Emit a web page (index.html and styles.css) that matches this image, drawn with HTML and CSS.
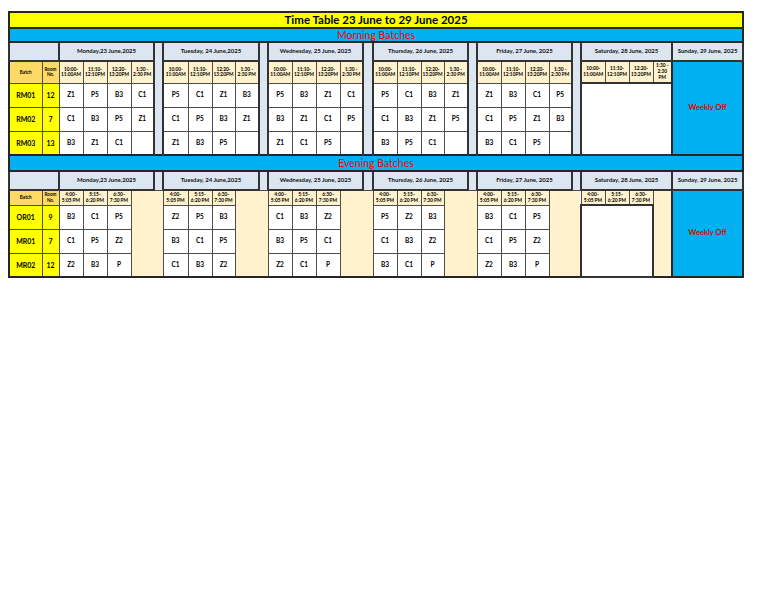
FILE: index.html
```html
<!DOCTYPE html>
<html>
<head>
<meta charset="utf-8">
<link rel="stylesheet" href="styles.css">
</head>
<body>
<table class="tt">
<colgroup>
<col style="width:33px"><col style="width:17px">
<col style="width:24px"><col style="width:24px"><col style="width:24px"><col style="width:23px"><col style="width:9px">
<col style="width:25px"><col style="width:24px"><col style="width:23px"><col style="width:24px"><col style="width:9px">
<col style="width:24px"><col style="width:24px"><col style="width:24px"><col style="width:23px"><col style="width:10px">
<col style="width:24px"><col style="width:24px"><col style="width:23px"><col style="width:24px"><col style="width:9px">
<col style="width:24px"><col style="width:24px"><col style="width:24px"><col style="width:23px"><col style="width:9px">
<col style="width:24px"><col style="width:24px"><col style="width:24px"><col style="width:19px">
<col style="width:71px">
</colgroup>
<tr class="r-title"><td colspan="32" class="title">Time Table 23 June to 29 June 2025</td></tr>
<tr class="r-band"><td colspan="32" class="band">Morning Batches</td></tr>
<tr class="r-day">
<td colspan="2" class="day"></td>
<td colspan="4" class="day">Monday,23 June,2025</td><td class="sp" rowspan="5"></td>
<td colspan="4" class="day">Tuesday, 24 June,2025</td><td class="sp" rowspan="5"></td>
<td colspan="4" class="day">Wednesday, 25 June, 2025</td><td class="sp" rowspan="5"></td>
<td colspan="4" class="day">Thursday, 26 June, 2025</td><td class="sp" rowspan="5"></td>
<td colspan="4" class="day">Friday, 27 June, 2025</td><td class="sp" rowspan="5"></td>
<td colspan="4" class="day">Saturday, 28 June, 2025</td>
<td class="day">Sunday, 29 June, 2025</td>
</tr>
<tr class="r-time">
<td class="bh">Batch</td><td class="bh">Room<br>No.</td>
<td class="tm">10:00-<br>11:00AM</td><td class="tm">11:10-<br>12:10PM</td><td class="tm">12:20-<br>13:20PM</td><td class="tm">1:30 -<br>2:30 PM</td>
<td class="tm">10:00-<br>11:00AM</td><td class="tm">11:10-<br>12:10PM</td><td class="tm">12:20-<br>13:20PM</td><td class="tm">1:30 -<br>2:30 PM</td>
<td class="tm">10:00-<br>11:00AM</td><td class="tm">11:10-<br>12:10PM</td><td class="tm">12:20-<br>13:20PM</td><td class="tm">1:30 -<br>2:30 PM</td>
<td class="tm">10:00-<br>11:00AM</td><td class="tm">11:10-<br>12:10PM</td><td class="tm">12:20-<br>13:20PM</td><td class="tm">1:30 -<br>2:30 PM</td>
<td class="tm">10:00-<br>11:00AM</td><td class="tm">11:10-<br>12:10PM</td><td class="tm">12:20-<br>13:20PM</td><td class="tm">1:30 -<br>2:30 PM</td>
<td class="tm">10:00-<br>11:00AM</td><td class="tm">11:10-<br>12:10PM</td><td class="tm">12:20-<br>13:20PM</td><td class="tm">1:30 -<br>2:30<br>PM</td>
<td class="off" rowspan="4">Weekly Off</td>
</tr>
<tr class="r-data">
<td class="bt">RM01</td><td class="bt">12</td>
<td>Z1</td><td>P5</td><td>B3</td><td>C1</td>
<td>P5</td><td>C1</td><td>Z1</td><td>B3</td>
<td>P5</td><td>B3</td><td>Z1</td><td>C1</td>
<td>P5</td><td>C1</td><td>B3</td><td>Z1</td>
<td>Z1</td><td>B3</td><td>C1</td><td>P5</td>
<td colspan="4" rowspan="3" class="blank"></td>
</tr>
<tr class="r-data">
<td class="bt">RM02</td><td class="bt">7</td>
<td>C1</td><td>B3</td><td>P5</td><td>Z1</td>
<td>C1</td><td>P5</td><td>B3</td><td>Z1</td>
<td>B3</td><td>Z1</td><td>C1</td><td>P5</td>
<td>C1</td><td>B3</td><td>Z1</td><td>P5</td>
<td>C1</td><td>P5</td><td>Z1</td><td>B3</td>
</tr>
<tr class="r-data">
<td class="bt">RM03</td><td class="bt">13</td>
<td>B3</td><td>Z1</td><td>C1</td><td></td>
<td>Z1</td><td>B3</td><td>P5</td><td></td>
<td>Z1</td><td>C1</td><td>P5</td><td></td>
<td>B3</td><td>P5</td><td>C1</td><td></td>
<td>B3</td><td>C1</td><td>P5</td><td></td>
</tr>
<tr class="r-band2"><td colspan="32" class="band">Evening Batches</td></tr>
<tr class="r-day">
<td colspan="2" class="day"></td>
<td colspan="4" class="day">Monday,23 June,2025</td><td class="sp"></td>
<td colspan="4" class="day">Tuesday, 24 June,2025</td><td class="sp"></td>
<td colspan="4" class="day">Wednesday, 25 June, 2025</td><td class="sp"></td>
<td colspan="4" class="day">Thursday, 26 June, 2025</td><td class="sp"></td>
<td colspan="4" class="day">Friday, 27 June, 2025</td><td class="sp"></td>
<td colspan="4" class="day">Saturday, 28 June, 2025</td>
<td class="day">Sunday, 29 June, 2025</td>
</tr>
<tr class="r-time2">
<td class="bh">Batch</td><td class="bh">Room<br>No.</td>
<td class="tm">4:00-<br>5:05 PM</td><td class="tm">5:15-<br>6:20 PM</td><td class="tm">6:30-<br>7:30 PM</td><td class="cream" colspan="2" rowspan="4"></td>
<td class="tm">4:00-<br>5:05 PM</td><td class="tm">5:15-<br>6:20 PM</td><td class="tm">6:30-<br>7:30 PM</td><td class="cream" colspan="2" rowspan="4"></td>
<td class="tm">4:00-<br>5:05 PM</td><td class="tm">5:15-<br>6:20 PM</td><td class="tm">6:30-<br>7:30 PM</td><td class="cream" colspan="2" rowspan="4"></td>
<td class="tm">4:00-<br>5:05 PM</td><td class="tm">5:15-<br>6:20 PM</td><td class="tm">6:30-<br>7:30 PM</td><td class="cream" colspan="2" rowspan="4"></td>
<td class="tm">4:00-<br>5:05 PM</td><td class="tm">5:15-<br>6:20 PM</td><td class="tm">6:30-<br>7:30 PM</td><td class="cream" colspan="2" rowspan="4"></td>
<td class="tm">4:00-<br>5:05 PM</td><td class="tm">5:15-<br>6:20 PM</td><td class="tm">6:30-<br>7:30 PM</td><td class="cream" rowspan="4"></td>
<td class="off" rowspan="4">Weekly Off</td>
</tr>
<tr class="r-data">
<td class="bt">OR01</td><td class="bt">9</td>
<td>B3</td><td>C1</td><td>P5</td>
<td>Z2</td><td>P5</td><td>B3</td>
<td>C1</td><td>B3</td><td>Z2</td>
<td>P5</td><td>Z2</td><td>B3</td>
<td>B3</td><td>C1</td><td>P5</td>
<td colspan="3" rowspan="3" class="blank"></td>
</tr>
<tr class="r-data">
<td class="bt">MR01</td><td class="bt">7</td>
<td>C1</td><td>P5</td><td>Z2</td>
<td>B3</td><td>C1</td><td>P5</td>
<td>B3</td><td>P5</td><td>C1</td>
<td>C1</td><td>B3</td><td>Z2</td>
<td>C1</td><td>P5</td><td>Z2</td>
</tr>
<tr class="r-data">
<td class="bt">MR02</td><td class="bt">12</td>
<td>Z2</td><td>B3</td><td>P</td>
<td>C1</td><td>B3</td><td>Z2</td>
<td>Z2</td><td>C1</td><td>P</td>
<td>B3</td><td>C1</td><td>P</td>
<td>Z2</td><td>B3</td><td>P</td>
</tr>
</table>
</body>
</html>
```
FILE: styles.css
```css
html, body {
  margin: 0;
  padding: 0;
  background: #ffffff;
}
body {
  padding: 11px 0 0 8px;
  font-family: Lato, "Liberation Sans", Arial, sans-serif;
  font-weight: 700;
}
.tt {
  border-collapse: collapse;
  table-layout: fixed;
  width: 734px;
  border: 2px solid #262626;
}
.tt td {
  border: 1px solid #4d4d4d;
  padding: 0;
  text-align: center;
  vertical-align: middle;
  font-size: 6.5px;
  line-height: 1.15;
  color: #000000;
  background: #ffffff;
  overflow: hidden;
  white-space: nowrap;
}
.r-title { height: 16px; }
.r-band { height: 14px; }
.r-band2 { height: 16px; }
.r-day { height: 19px; }
.r-time { height: 22px; }
.r-time2 { height: 15px; }
.r-data { height: 24px; }

.tt td.title {
  background: #ffff00;
  font-size: 11.5px;
  color: #000;
  border: 2px solid #262626;
}
.tt td.band {
  background: #00b0f0;
  color: #ff0000;
  font-size: 10.5px;
  font-weight: 400;
  border: 2px solid #262626;
}
.tt td.day {
  background: #dce6f1;
  font-size: 6px;
  border: 2px solid #333;
  color: #111;
}
.tt td.sp {
  background: #dce6f1;
  border-left: 2px solid #333;
  border-right: 2px solid #333;
}
.tt td.bh {
  background: #ffd966;
  font-size: 4.6px;
  line-height: 1.2;
}
.tt td.tm {
  background: #fff2cc;
  font-size: 4.8px;
  line-height: 1.2;
  white-space: nowrap;
}
.tt td.bt {
  background: #ffff00;
  font-size: 7px;
  color: #000;
}
.tt td.blank {
  background: #ffffff;
  border: 2px solid #333;
}
.tt td.cream {
  background: #fff2cc;
  border-top: 1px solid #4d4d4d;
}
.tt td.off {
  background: #00b0f0;
  color: #e00000;
  font-size: 7.5px;
  border: 2px solid #262626;
}
```
